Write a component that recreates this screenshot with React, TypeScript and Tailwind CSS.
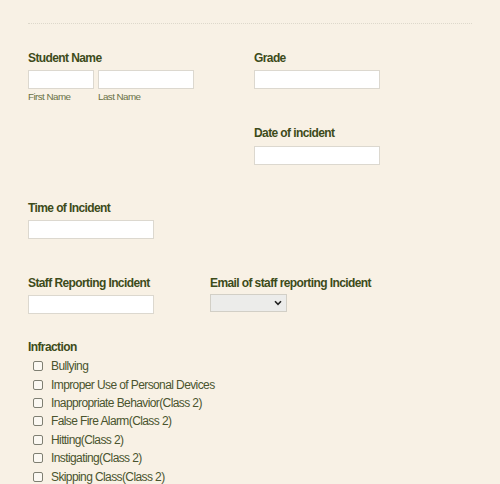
const font = { fontFamily: '"Liberation Sans", Arial, sans-serif' }

const infractions = [
  'Bullying',
  'Improper Use of Personal Devices',
  'Inappropriate Behavior(Class 2)',
  'False Fire Alarm(Class 2)',
  'Hitting(Class 2)',
  'Instigating(Class 2)',
  'Skipping Class(Class 2)',
]

function Label({ children }: { children: React.ReactNode }) {
  return (
    <div className="text-[12px] leading-[13px] font-bold tracking-[-0.6px] text-[#3d4b1a]">
      {children}
    </div>
  )
}

function TextBox({ className = '' }: { className?: string }) {
  return (
    <input
      type="text"
      className={`block h-[19px] bg-white border border-[#dcd8cf] outline-none ${className}`}
    />
  )
}

export default function App() {
  return (
    <div className="w-[500px] h-[484px] overflow-hidden bg-[#f8f1e5]" style={font}>
      <div className="pt-[23px] px-[28px]">
        <div className="border-t border-dotted border-[#ddd8cb]" />
      </div>

      <div className="px-[28px] pt-[28px]">
        <div className="flex">
          <div className="w-[226px]">
            <Label>Student Name</Label>
            <div className="mt-[5px] flex gap-[4px]">
              <div>
                <TextBox className="w-[66px]" />
                <div className="text-[9.8px] leading-[11px] tracking-[-0.55px] text-[#6a7145] mt-[2px]">First Name</div>
              </div>
              <div>
                <TextBox className="w-[96px]" />
                <div className="text-[9.8px] leading-[11px] tracking-[-0.55px] text-[#6a7145] mt-[2px]">Last Name</div>
              </div>
            </div>
          </div>
          <div>
            <Label>Grade</Label>
            <TextBox className="mt-[5px] w-[126px]" />
            <div className="mt-[38px]">
              <Label>Date of incident</Label>
            </div>
            <TextBox className="mt-[6px] w-[126px]" />
          </div>
        </div>

        <div className="mt-[37px]">
          <Label>Time of Incident</Label>
          <TextBox className="mt-[5px] w-[126px]" />
        </div>

        <div className="mt-[38px] flex">
          <div className="w-[182px]">
            <Label>Staff Reporting Incident</Label>
            <TextBox className="mt-[5px] w-[126px]" />
          </div>
          <div>
            <Label>Email of staff reporting Incident</Label>
            <div className="mt-[4px] w-[77px] h-[18px] bg-[#ececea] border border-[#d2cfc6] flex items-center justify-end pr-[4px]">
              <svg width="8" height="6" viewBox="0 0 8 6">
                <path d="M1 1.2 L4 4.3 L7 1.2" fill="none" stroke="#222" strokeWidth="1.6" />
              </svg>
            </div>
          </div>
        </div>

        <div className="mt-[27px]">
          <Label>Infraction</Label>
          <div className="mt-[3px] pl-[5px]">
            {infractions.map((item) => (
              <label key={item} className="flex items-center h-[18.4px]">
                <span className="w-[10px] h-[10px] rounded-[2px] border border-[#7f7f72] bg-[#fbf8f2]" />
                <span className="ml-[8px] text-[12px] tracking-[-0.6px] text-[#4a542e]">{item}</span>
              </label>
            ))}
          </div>
        </div>
      </div>
    </div>
  )
}
